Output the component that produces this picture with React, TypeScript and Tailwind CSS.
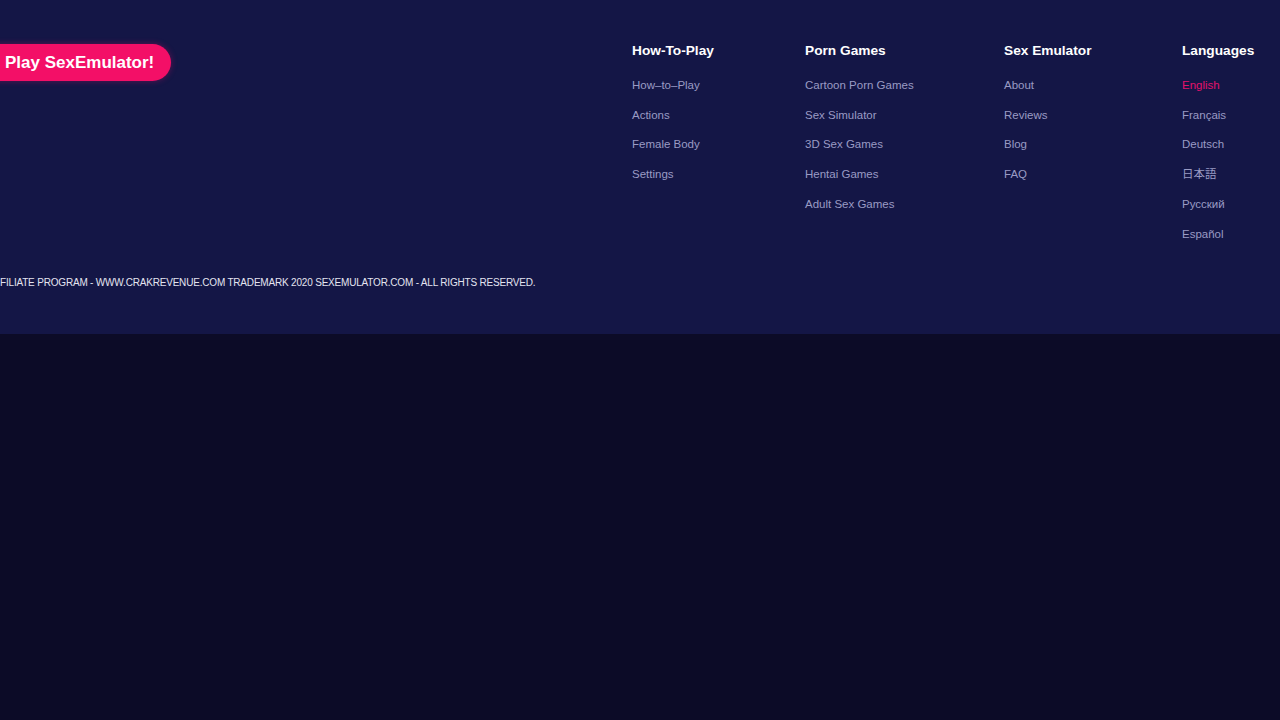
import React from 'react';

const columns = [
  {
    title: 'How-To-Play',
    width: 'w-[173px]',
    links: ['How–to–Play', 'Actions', 'Female Body', 'Settings'],
  },
  {
    title: 'Porn Games',
    width: 'w-[199px]',
    links: ['Cartoon Porn Games', 'Sex Simulator', '3D Sex Games', 'Hentai Games', 'Adult Sex Games'],
  },
  {
    title: 'Sex Emulator',
    width: 'w-[178px]',
    links: ['About', 'Reviews', 'Blog', 'FAQ'],
  },
  {
    title: 'Languages',
    width: 'w-[98px]',
    links: ['English', 'Français', 'Deutsch', '日本語', 'Русский', 'Español'],
  },
];

export default function App() {
  return (
    <div
      className="min-h-[720px] bg-[#0c0b27] overflow-hidden"
      style={{ fontFamily: '"Liberation Sans", Arial, "Noto Sans CJK JP", sans-serif' }}
    >
      <footer className="h-[334px] bg-[#141646] overflow-hidden">
        <div className="flex items-start">
          <div className="w-[632px] pt-[44px]">
            <button className="-ml-5 h-[37px] pl-[25px] pr-[17px] rounded-r-full bg-[#f30f67] text-white text-[17px] font-bold leading-[37px] shadow-[0_0_6px_rgba(243,15,103,0.35)]">
              Play SexEmulator!
            </button>
          </div>
          <div className="flex pt-[41px]">
            {columns.map((col) => (
              <div key={col.title} className={col.width}>
                <h3 className="text-[13.7px] font-bold leading-[20px] text-white">{col.title}</h3>
                <ul className="mt-[10px]">
                  {col.links.map((link) => (
                    <li
                      key={link}
                      className={
                        link === 'English'
                          ? 'text-[11.5px] leading-[29.7px] text-[#e3126c]'
                          : 'text-[11.5px] leading-[29.7px] text-[#9a9bc4]'
                      }
                    >
                      {link}
                    </li>
                  ))}
                </ul>
              </div>
            ))}
          </div>
        </div>
        <p className="mt-[27px] text-[10px] leading-[14px] text-[#e4e4f0] tracking-[-0.019em] whitespace-nowrap">
          FILIATE PROGRAM - WWW.CRAKREVENUE.COM TRADEMARK 2020 SEXEMULATOR.COM - ALL RIGHTS RESERVED.
        </p>
      </footer>
    </div>
  );
}
